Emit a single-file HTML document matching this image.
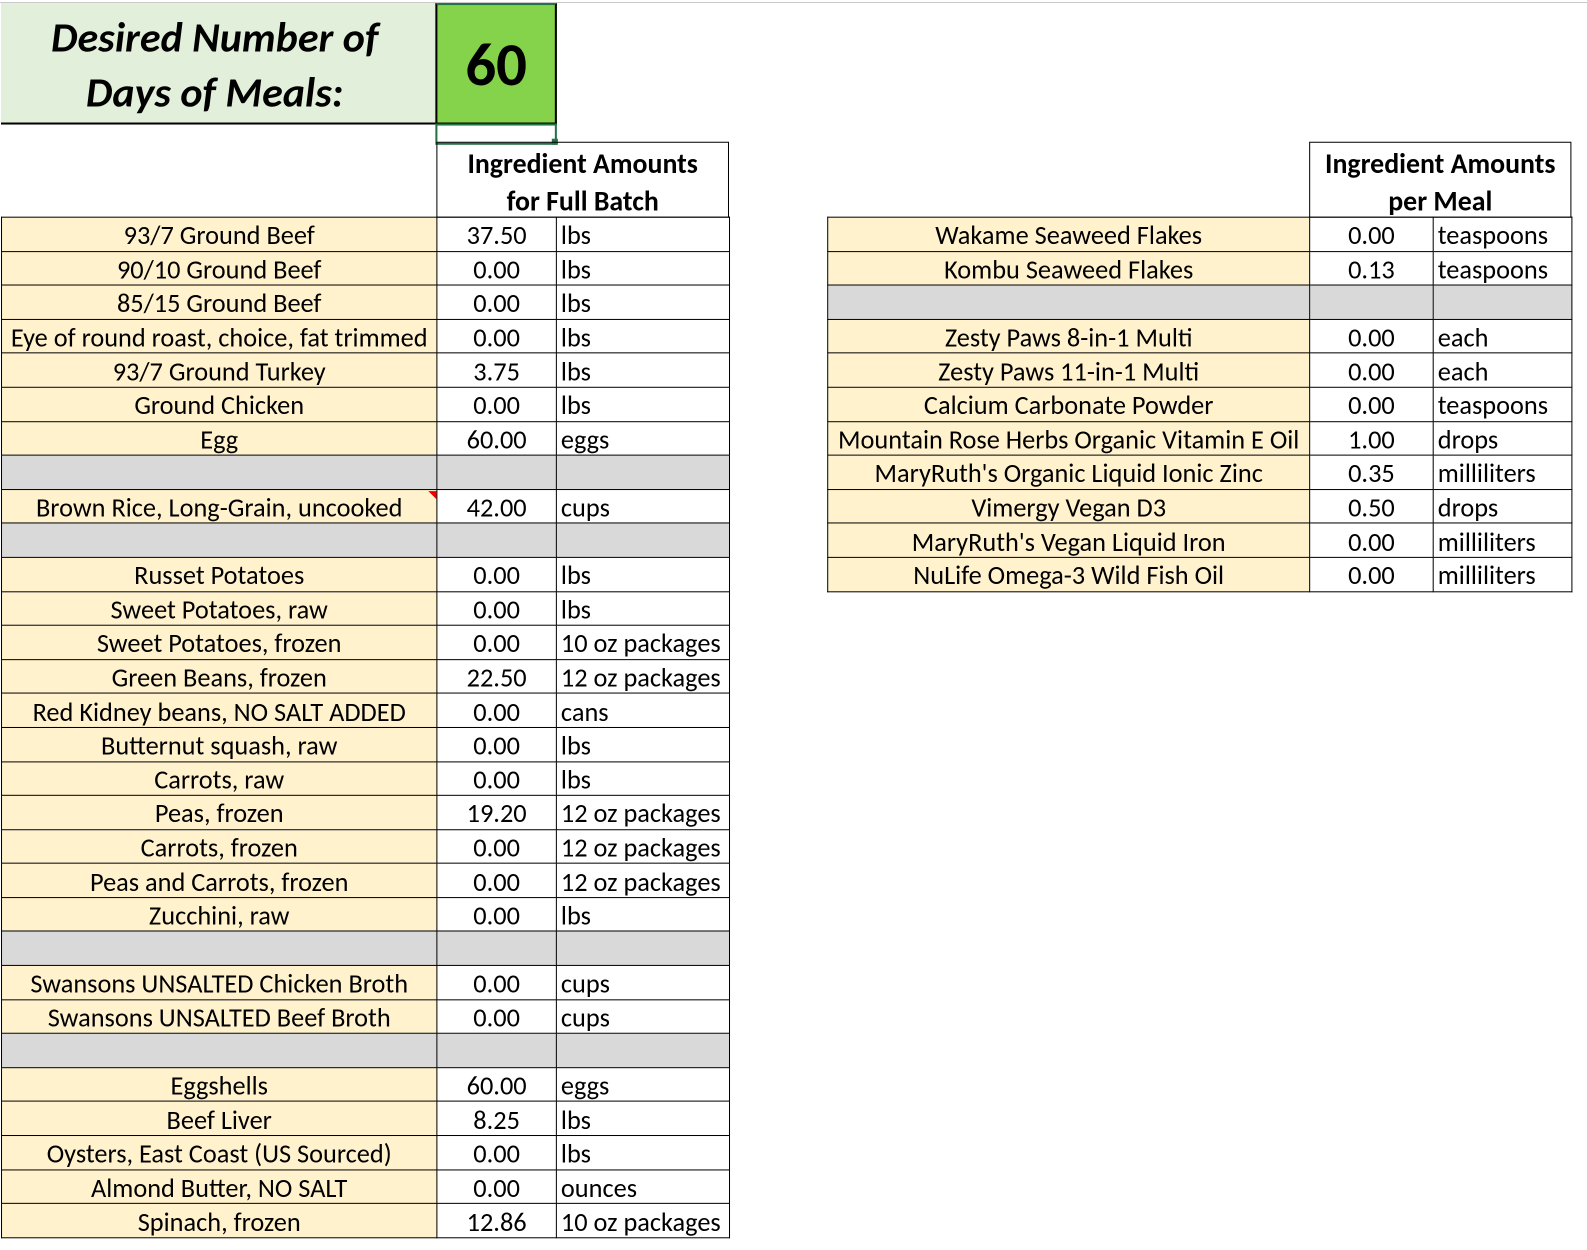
<!DOCTYPE html>
<html><head><meta charset="utf-8"><style>
body{margin:0;width:1587px;height:1250px;background:#fff;position:relative;overflow:hidden;font-family:Calibri,Carlito,"Liberation Sans",sans-serif;}
#w{position:absolute;left:0;top:0;width:1568px;height:1235px;transform:scale(1.0125);transform-origin:0 0;}
.abs{position:absolute;box-sizing:border-box;}
table{position:absolute;border-collapse:collapse;table-layout:fixed;font-size:26px;color:#000;}
td{border:1px solid #000;height:30.6px;padding:2px 4px 0 4px;white-space:nowrap;overflow:hidden;line-height:30px;}
td.n{background:#fff2cc;text-align:center;}
td.v{text-align:center;}
tr.g td{background:#d9d9d9;}
.hdr{font-weight:bold;text-align:center;font-size:27.5px;line-height:37px;}
</style></head><body><div id="w">
<div class="abs" style="left:0;top:2px;width:1587px;height:1px;background:#c8c8c8"></div>
<div class="abs" style="left:1px;top:3px;width:430px;height:120px;background:#e2efda;border-bottom:2px solid #000;font-weight:bold;font-style:italic;font-size:41.5px;text-align:center;line-height:54px;padding-top:8px;padding-right:8px">Desired Number of<br>Days of Meals:</div>
<div class="abs" style="left:430px;top:3px;width:120px;height:120px;background:#85d34b;border:2px solid #000;border-top-color:#217346;font-weight:bold;font-size:60px;text-align:center;line-height:120px">60</div>
<div class="abs" style="left:430px;top:122px;width:120px;height:21px;border:2px solid #217346"></div>
<div class="abs" style="left:545px;top:137px;width:6px;height:6px;background:#217346"></div>
<div class="abs hdr" style="left:431px;top:140px;width:289px;height:75px;border:1px solid #000;padding-top:3px">Ingredient Amounts<br>for Full Batch</div>
<div class="abs hdr" style="left:1293px;top:140px;width:259px;height:75px;border:1px solid #000;padding-top:3px">Ingredient Amounts<br>per Meal</div>

<table style="left:1px;top:214px;width:719px">
<colgroup><col style="width:430px"><col style="width:118px"><col style="width:171px"></colgroup>
<tr><td class="n">93/7 Ground Beef</td><td class="v">37.50</td><td>lbs</td></tr>
<tr><td class="n">90/10 Ground Beef</td><td class="v">0.00</td><td>lbs</td></tr>
<tr><td class="n">85/15 Ground Beef</td><td class="v">0.00</td><td>lbs</td></tr>
<tr><td class="n">Eye of round roast, choice, fat trimmed</td><td class="v">0.00</td><td>lbs</td></tr>
<tr><td class="n">93/7 Ground Turkey</td><td class="v">3.75</td><td>lbs</td></tr>
<tr><td class="n">Ground Chicken</td><td class="v">0.00</td><td>lbs</td></tr>
<tr><td class="n">Egg</td><td class="v">60.00</td><td>eggs</td></tr>
<tr class="g"><td></td><td></td><td></td></tr>
<tr><td class="n">Brown Rice, Long-Grain, uncooked</td><td class="v">42.00</td><td>cups</td></tr>
<tr class="g"><td></td><td></td><td></td></tr>
<tr><td class="n">Russet Potatoes</td><td class="v">0.00</td><td>lbs</td></tr>
<tr><td class="n">Sweet Potatoes, raw</td><td class="v">0.00</td><td>lbs</td></tr>
<tr><td class="n">Sweet Potatoes, frozen</td><td class="v">0.00</td><td>10 oz packages</td></tr>
<tr><td class="n">Green Beans, frozen</td><td class="v">22.50</td><td>12 oz packages</td></tr>
<tr><td class="n">Red Kidney beans, NO SALT ADDED</td><td class="v">0.00</td><td>cans</td></tr>
<tr><td class="n">Butternut squash, raw</td><td class="v">0.00</td><td>lbs</td></tr>
<tr><td class="n">Carrots, raw</td><td class="v">0.00</td><td>lbs</td></tr>
<tr><td class="n">Peas, frozen</td><td class="v">19.20</td><td>12 oz packages</td></tr>
<tr><td class="n">Carrots, frozen</td><td class="v">0.00</td><td>12 oz packages</td></tr>
<tr><td class="n">Peas and Carrots, frozen</td><td class="v">0.00</td><td>12 oz packages</td></tr>
<tr><td class="n">Zucchini, raw</td><td class="v">0.00</td><td>lbs</td></tr>
<tr class="g"><td></td><td></td><td></td></tr>
<tr><td class="n">Swansons UNSALTED Chicken Broth</td><td class="v">0.00</td><td>cups</td></tr>
<tr><td class="n">Swansons UNSALTED Beef Broth</td><td class="v">0.00</td><td>cups</td></tr>
<tr class="g"><td></td><td></td><td></td></tr>
<tr><td class="n">Eggshells</td><td class="v">60.00</td><td>eggs</td></tr>
<tr><td class="n">Beef Liver</td><td class="v">8.25</td><td>lbs</td></tr>
<tr><td class="n">Oysters, East Coast (US Sourced)</td><td class="v">0.00</td><td>lbs</td></tr>
<tr><td class="n">Almond Butter, NO SALT</td><td class="v">0.00</td><td>ounces</td></tr>
<tr><td class="n">Spinach, frozen</td><td class="v">12.86</td><td>10 oz packages</td></tr>
</table>
<div class="abs" style="left:423px;top:485px;width:0;height:0;border-left:8px solid transparent;border-top:8px solid #e00"></div>

<table style="left:817px;top:214px;width:735px">
<colgroup><col style="width:476px"><col style="width:122px"><col style="width:137px"></colgroup>
<tr><td class="n">Wakame Seaweed Flakes</td><td class="v">0.00</td><td>teaspoons</td></tr>
<tr><td class="n">Kombu Seaweed Flakes</td><td class="v">0.13</td><td>teaspoons</td></tr>
<tr class="g"><td></td><td></td><td></td></tr>
<tr><td class="n">Zesty Paws 8-in-1 Multi</td><td class="v">0.00</td><td>each</td></tr>
<tr><td class="n">Zesty Paws 11-in-1 Multi</td><td class="v">0.00</td><td>each</td></tr>
<tr><td class="n">Calcium Carbonate Powder</td><td class="v">0.00</td><td>teaspoons</td></tr>
<tr><td class="n">Mountain Rose Herbs Organic Vitamin E Oil</td><td class="v">1.00</td><td>drops</td></tr>
<tr><td class="n">MaryRuth's Organic Liquid Ionic Zinc</td><td class="v">0.35</td><td>milliliters</td></tr>
<tr><td class="n">Vimergy Vegan D3</td><td class="v">0.50</td><td>drops</td></tr>
<tr><td class="n">MaryRuth's Vegan Liquid Iron</td><td class="v">0.00</td><td>milliliters</td></tr>
<tr><td class="n">NuLife Omega-3 Wild Fish Oil</td><td class="v">0.00</td><td>milliliters</td></tr>
</table>
</div></body></html>
